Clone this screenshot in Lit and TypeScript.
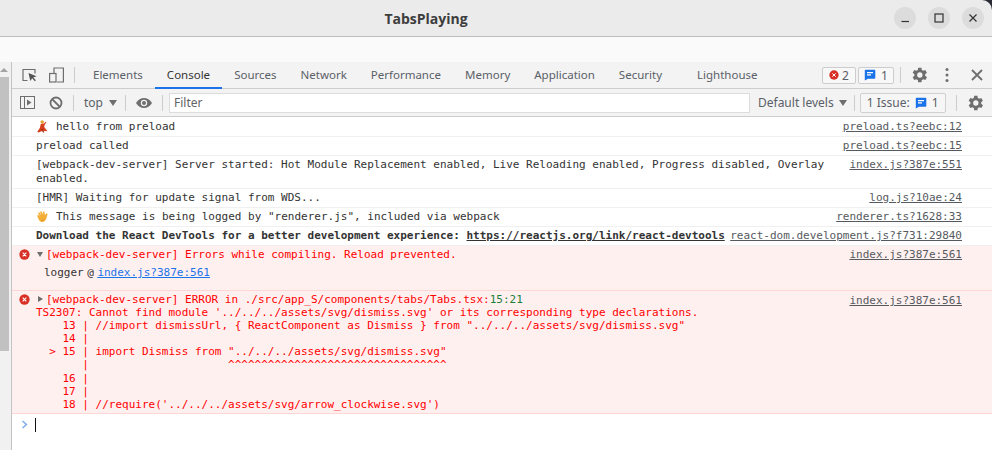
import { LitElement, html, css } from "lit";
import { customElement } from "lit/decorators.js";

const errIcon = html`<svg class="err" viewBox="0 0 12 12"><circle cx="6" cy="6" r="5.6" fill="#d93025"/><path d="M4 4l4 4M8 4l-4 4" stroke="#fff" stroke-width="1.2"/></svg>`;
const msgIcon = html`<svg class="msg" viewBox="0 0 12 12"><path d="M1.500.8h9a.8.8 0 0 1 .8.8v7.400a.8.8 0 0 1-.8.8H4L.8 11.500V1.600A.8.8 0 0 1 1.500.8z" fill="#1a73e8"/><path d="M3 3.600h6M3 5.900h4" stroke="#fff" stroke-width="1.100"/></svg>`;
const gear = html`<svg class="gear" viewBox="0 0 24 24"><path fill="#6e6e6e" d="M19.400 13a7.600 7.600 0 0 0 0-2l2.100-1.600-2-3.500-2.500 1a7.500 7.500 0 0 0-1.700-1L15 3.200h-4l-.4 2.700a7.500 7.500 0 0 0-1.700 1l-2.500-1-2 3.500L6.500 11a7.600 7.600 0 0 0 0 2l-2.100 1.600 2 3.500 2.500-1a7.500 7.500 0 0 0 1.700 1l.4 2.700h4l.4-2.700a7.500 7.500 0 0 0 1.700-1l2.500 1 2-3.500zM13 15.200a3.200 3.200 0 1 1 0-6.400 3.200 3.200 0 0 1 0 6.400z"/></svg>`;
const dancer = html`<svg class="emo" viewBox="0 0 13 13"><circle cx="6.200" cy="2" r="1.800" fill="#e0a93a"/><path d="M4.800 4l3.200-.5 1.800-1.800.6.600L8.600 5 8.200 7l3.300 4.300-4.800-.6L2.500 12.600l-1.200-.8L3.800 8z" fill="#d6401a"/><path d="M6.200 8.500l2.300 4h-1.300L5 9.500z" fill="#a82a10"/></svg>`;
const wave = html`<svg class="emo" viewBox="0 0 13 13"><path d="M1.200 5.800l1-1 1.600 1.600-1.800-3.300 1.300-.9L5.200 5.600 4 1.800 5.400 1.200l1.900 3.900L6.900 1.700 8.300 1.500 9 5l1.300-1.700 1.300.8-1.100 3.900C9.700 11 7.200 12.600 4.900 11.800 3 11 2.300 8.900 1.200 5.800z" fill="#f4ae38"/><path d="M5 9.800c1 .8 2.500.6 3.400-.5" stroke="#d98a1e" stroke-width=".8" fill="none"/></svg>`;

const tabs = ["Elements", "Console", "Sources", "Network", "Performance", "Memory", "Application", "Security", "Lighthouse"];

@customElement("app-root")
export class AppRoot extends LitElement {
  static styles = css`
    :host { display: block; width: 992px; height: 450px; overflow: hidden; background: #2b2b35; font-family: "Noto Sans", sans-serif; color: #333; position: relative; }
    .window { display: flex; flex-direction: column; height: 450px; }
    .title { height: 36px; flex: none; background: #ebebeb; border-bottom: 1px solid #bdbdbd; border-top-right-radius: 10px; display: flex; align-items: center; justify-content: center; position: relative; font-size: 14px; font-weight: 700; color: #3d3d3d; font-family: "Open Sans", "Noto Sans", sans-serif; padding-right: 140px; }
    .wbtns { position: absolute; right: 8px; top: 7px; display: flex; gap: 12px; }
    .wbtn { width: 22px; height: 22px; border-radius: 50%; background: #dcdcdc; display: flex; align-items: center; justify-content: center; }
    .wbtn svg { width: 12px; height: 12px; }
    .blank { height: 25px; flex: none; background: #fafafa; }
    .main { flex: 1; display: flex; min-height: 0; background: #fff; }
    .sb { width: 11px; flex: none; background: #f1f1f1; border-right: 1px solid #c4c4c4; display: flex; flex-direction: column; }
    .sb .arrow { height: 15px; display: flex; align-items: center; }
    .sb .arrow i { border: 4px solid transparent; border-bottom: 4px solid #a3a3a3; border-top: 0; }
    .sb .thumb { height: 274px; width: 9px; background: #c1c1c1; }
    .dt { flex: 1; display: flex; flex-direction: column; min-width: 0; }
    .tabs { height: 26px; flex: none; background: #f3f3f3; border-bottom: 1px solid #cbcdd1; display: flex; align-items: stretch; font-size: 11.500px; color: #5a6068; }
    .ticons { display: flex; align-items: center; gap: 12px; padding-left: 10px; width: 62px; box-sizing: border-box; }
    .ticons svg { width: 15px; height: 16px; flex: none; }
    .sep { width: 1px; background: #cdcdcd; height: 16px; align-self: center; flex: none; }
    .tspace { width: 6px; flex: none; }
    .tab { display: flex; align-items: center; padding: 0 12px; white-space: nowrap; border-bottom: 2px solid transparent; margin-bottom: -1px; }
    .tab.on { color: #333; border-bottom-color: #1a73e8; }
    .tab.last { margin-left: 11px; }
    .tright { margin-left: auto; display: flex; align-items: center; }
    .badge { border: 1px solid #ccc; border-radius: 2px; display: flex; align-items: center; justify-content: center; gap: 3px; background: #f8f8f8; font-size: 12px; box-sizing: border-box; height: 17px; }
    .badge.a { width: 34px; margin-right: 2px; }
    .badge.b2 { width: 36px; gap: 5px; }
    .err { width: 10px; height: 10px; flex: none; }
    .msg { width: 12px; height: 12px; flex: none; }
    .gear { width: 20px; height: 20px; flex: none; }
    .sep.s1 { margin: 0 8px 0 6px; }
    .dots { width: 16px; height: 16px; margin-left: 10px; flex: none; }
    .close { width: 14px; height: 14px; margin: 0 8px 0 15px; flex: none; }
    .filter { flex: none; background: #f3f3f3; border-bottom: 1px solid #cbcdd1; display: flex; align-items: center; font-size: 12px; color: #5a6068; height: 27px; }
    .ico { display: flex; align-items: center; justify-content: center; flex: none; }
    .i1 { margin-left: 8px; }
    .i2 { margin-left: 14px; }
    .sep.s2 { margin-left: 10px; }
    .top { margin-left: 10px; }
    .tri { width: 0; height: 0; border: 4px solid transparent; border-top: 6px solid #6e6e6e; border-bottom: 0; display: inline-block; flex: none; }
    .t1 { margin-left: 6px; }
    .sep.s3 { margin-left: 8px; }
    .i3 { margin-left: 10px; }
    .sep.s4 { margin-left: 10px; }
    .input { width: 581px; height: 20px; background: #fff; border: 1px solid #dcdcdc; box-sizing: border-box; padding-left: 4px; line-height: 18px; margin-left: 6px; color: #5f6368; flex: none; }
    .levels { margin-left: 8px; display: flex; align-items: center; gap: 5px; white-space: nowrap; }
    .sep.s5 { margin-left: 7px; }
    .issue { height: 20px; width: 86px; box-sizing: border-box; border: 1px solid #d0d0d0; border-radius: 2px; display: flex; align-items: center; justify-content: center; gap: 5px; margin-left: 5px; white-space: nowrap; background: #f6f6f6; flex: none; }
    .sep.s6 { margin-left: 10px; }
    .g2 { margin-left: 8px; display: flex; }
    .log { flex: 1; background: #fff; font-family: "DejaVu Sans Mono", monospace; font-size: 11px; line-height: 14px; color: #333; min-height: 0; }
    .row { position: relative; border-bottom: 1px solid #f0f0f0; padding: 2px 30px 2px 24px; display: flex; justify-content: space-between; gap: 12px; box-sizing: border-box; height: 19px; }
    .row.first { height: 20px; padding-top: 3px; }
    .row.tall { height: 33px; }
    .row.dl { gap: 6px; }
    .row.dl .txt { white-space: nowrap; font-weight: 700; }
    .row u { text-decoration: underline; }
    .row > .txt { flex: 1; min-width: 0; }
    .src { color: #565a60; text-decoration: underline; white-space: nowrap; flex: none; }
    .row .emo { width: 13px; height: 13px; vertical-align: top; margin-right: 7px; }
    .e { background: #fff0f0; color: #f00; border-bottom: 1px solid #ffd6d6; }
    .e .err { position: absolute; left: 7px; top: 3px; width: 11px; height: 11px; }
    .tw { display: inline-block; vertical-align: 1px; width: 0; height: 0; }
    .tw.d { border: 3.500px solid transparent; border-top: 5px solid #6e6e6e; border-bottom: 0; margin: 0 3px 0 1px; }
    .tw.r { border: 3.500px solid transparent; border-left: 5px solid #6e6e6e; border-right: 0; margin: 0 3px 0 2px; }
    .row.e1 { height: 45px; }
    .row.e2 { height: 123px; padding-top: 3px; padding-bottom: 1px; }
    .e2 .txt { line-height: 13px; white-space: pre; margin-top: -1px; }
    .l2 { display: block; margin-top: 1px; }
    .trace { color: #333; display: flex; gap: 3.500px; margin: 4px 0 0 8px; }
    .trace a { color: #1a73e8; text-decoration: underline; }
    .ok { color: #188038; }
    .prompt { display: flex; align-items: center; height: 21px; padding-left: 9px; gap: 7px; }
    .prompt svg { width: 7px; height: 9px; }
    .caret { width: 1px; height: 14px; background: #111; }
  `;

  render() {
    return html`<div class="window">
      <div class="title"><span>TabsPlaying</span>
        <div class="wbtns">
          <div class="wbtn"><svg viewBox="0 0 12 12"><path d="M2.500 9.500h7.500" stroke="#333" stroke-width="1.200"/></svg></div>
          <div class="wbtn"><svg viewBox="0 0 12 12"><rect x="2" y="2" width="8" height="8" fill="none" stroke="#333" stroke-width="1.200"/></svg></div>
          <div class="wbtn"><svg viewBox="0 0 12 12"><path d="M2.500 2.500l7 7M9.500 2.500l-7 7" stroke="#333" stroke-width="1.200"/></svg></div>
        </div>
      </div>
      <div class="blank"></div>
      <div class="main">
        <div class="sb"><div class="arrow"><i></i></div><div class="thumb"></div></div>
        <div class="dt">
          <div class="tabs">
            <div class="ticons">
              <svg viewBox="0 0 15 16"><path d="M5.500 13.500H1V2.500h12v4" fill="none" stroke="#6e6e6e" stroke-width="1.200"/><path d="M6.500 6l8 3.200-3.200 1.200 2.600 2.900-1.100 1-2.600-3-1.900 2.600z" fill="#555"/></svg>
              <svg viewBox="0 0 15 16"><path d="M5 6V1h9.400v14H8" fill="none" stroke="#6e6e6e" stroke-width="1.200"/><rect x=".6" y="6.500" width="6.400" height="8.500" fill="none" stroke="#6e6e6e" stroke-width="1.200"/></svg>
            </div>
            <div class="sep"></div>
            <div class="tspace"></div>
            ${tabs.map((t) => html`<div class="tab ${t === "Console" ? "on" : ""} ${t === "Lighthouse" ? "last" : ""}">${t}</div>`)}
            <div class="tright">
              <div class="badge a">${errIcon}<span>2</span></div>
              <div class="badge b2">${msgIcon}<span>1</span></div>
              <div class="sep s1"></div>
              ${gear}
              <svg class="dots" viewBox="0 0 16 16"><g fill="#6e6e6e"><circle cx="8" cy="2.500" r="1.500"/><circle cx="8" cy="8" r="1.500"/><circle cx="8" cy="13.500" r="1.500"/></g></svg>
              <svg class="close" viewBox="0 0 14 14"><path d="M2 2l10 10M12 2L2 12" stroke="#6e6e6e" stroke-width="1.800"/></svg>
            </div>
          </div>
          <div class="filter">
            <div class="ico i1"><svg width="15" height="13" viewBox="0 0 15 13"><rect x=".5" y=".5" width="14" height="12" fill="none" stroke="#6e6e6e"/><path d="M4.500 1v11" stroke="#6e6e6e"/><path d="M7 3.500l4.500 3-4.500 3z" fill="#6e6e6e"/></svg></div>
            <div class="ico i2"><svg width="14" height="14" viewBox="0 0 14 14"><circle cx="7" cy="7" r="5.500" fill="none" stroke="#6e6e6e" stroke-width="1.800"/><path d="M3 3l8 8" stroke="#6e6e6e" stroke-width="1.800"/></svg></div>
            <div class="sep s2"></div>
            <span class="top">top</span><span class="tri t1"></span>
            <div class="sep s3"></div>
            <div class="ico i3"><svg width="16" height="12" viewBox="0 0 16 12"><path d="M0 6c2-3.500 5-5 8-5s6 1.500 8 5c-2 3.500-5 5-8 5s-6-1.500-8-5z" fill="#6e6e6e"/><circle cx="8" cy="6" r="3.200" fill="#f3f3f3"/><circle cx="8" cy="6" r="2" fill="#6e6e6e"/></svg></div>
            <div class="sep s4"></div>
            <div class="input">Filter</div>
            <div class="levels">Default levels <span class="tri"></span></div>
            <div class="sep s5"></div>
            <div class="issue">1 Issue: ${msgIcon} 1</div>
            <div class="sep s6"></div>
            <div class="g2">${gear}</div>
          </div>
          <div class="log">
            <div class="row first"><div class="txt">${dancer}hello from preload</div><span class="src">preload.ts?eebc:12</span></div>
            <div class="row"><div class="txt">preload called</div><span class="src">preload.ts?eebc:15</span></div>
            <div class="row tall"><div class="txt">[webpack-dev-server] Server started: Hot Module Replacement enabled, Live Reloading enabled, Progress disabled, Overlay enabled.</div><span class="src">index.js?387e:551</span></div>
            <div class="row"><div class="txt">[HMR] Waiting for update signal from WDS...</div><span class="src">log.js?10ae:24</span></div>
            <div class="row"><div class="txt">${wave}This message is being logged by "renderer.js", included via webpack</div><span class="src">renderer.ts?1628:33</span></div>
            <div class="row dl"><div class="txt">Download the React DevTools for a better development experience: <u>https://reactjs.org/link/react-devtools</u></div><span class="src">react-dom.development.js?f731:29840</span></div>
            <div class="row e e1">${errIcon}<div class="txt"><span class="tw d"></span>[webpack-dev-server] Errors while compiling. Reload prevented.<div class="trace"><span>logger</span><span>@</span><a>index.js?387e:561</a></div></div><span class="src">index.js?387e:561</span></div>
            <div class="row e e2">${errIcon}<div class="txt"><span class="tw r"></span>[webpack-dev-server] ERROR in ./src/app_S/components/tabs/Tabs.tsx:<span class="ok">15:21</span>
TS2307: Cannot find module '../../../assets/svg/dismiss.svg' or its corresponding type declarations.
    13 | //import dismissUrl, { ReactComponent as Dismiss } from "../../../assets/svg/dismiss.svg"
    14 |
  > 15 | import Dismiss from "../../../assets/svg/dismiss.svg"
       |                     ^^^^^^^^^^^^^^^^^^^^^^^^^^^^^^^^^<span class="l2">    16 |
    17 |
    18 | //require('../../../assets/svg/arrow_clockwise.svg')</span></div><span class="src">index.js?387e:561</span></div>
            <div class="prompt"><svg viewBox="0 0 7 9"><path d="M1.500 1l4 3.500-4 3.500" fill="none" stroke="#7aa9ee" stroke-width="1.400"/></svg><span class="caret"></span></div>
          </div>
        </div>
      </div>
    </div>`;
  }
}
